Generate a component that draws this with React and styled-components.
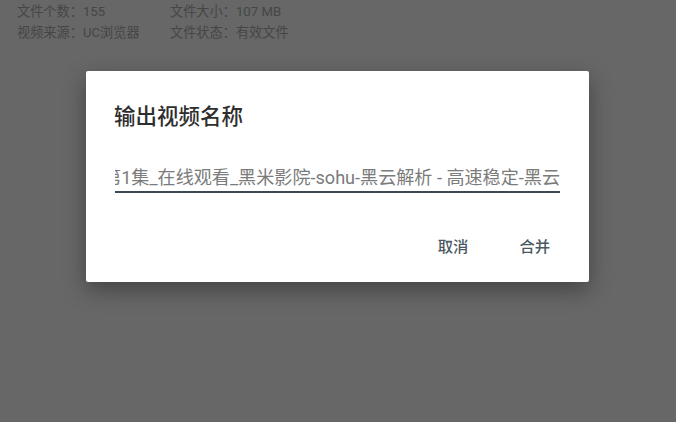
import React from 'react'
import styled, { createGlobalStyle } from 'styled-components'

const Global = createGlobalStyle`
  html, body {
    margin: 0;
    padding: 0;
    background: #666766;
  }
  body {
    font-family: Roboto, "Noto Sans CJK SC", sans-serif;
  }
`

const Screen = styled.div`
  width: 676px;
  height: 422px;
  background: #666766;
  overflow: hidden;
`

const InfoGrid = styled.div`
  display: grid;
  grid-template-columns: 153px auto;
  row-gap: 4px;
  padding: 3px 0 0 17px;
  font-size: 13.2px;
  line-height: 17px;
  color: #454645;
`

const DialogWrap = styled.div`
  padding: 30px 0 0 86px;
`

const Dialog = styled.div`
  width: 503px;
  height: 211px;
  background: #fff;
  border-radius: 2px;
  box-shadow: 0 8px 22px rgba(0, 0, 0, 0.35);
  box-sizing: border-box;
  padding: 32px 29px 0 28px;
  display: flex;
  flex-direction: column;
`

const Title = styled.h2`
  margin: 0;
  font-weight: 500;
  font-size: 21.5px;
  line-height: 28px;
  color: #2e2e2e;
`

const Field = styled.div`
  margin: 33px 0 0 1px;
  height: 27px;
  border-bottom: 2px solid #3b4a52;
  overflow: hidden;
  display: flex;
  justify-content: flex-end;
  align-items: flex-end;
`

const FieldText = styled.span`
  white-space: nowrap;
  font-size: 18.1px;
  line-height: 24px;
  padding-bottom: 1px;
  color: #7b7b7b;
`

const Actions = styled.div`
  display: flex;
  justify-content: flex-end;
  gap: 51px;
  margin-top: 44px;
  padding-right: 10px;
`

const ActionButton = styled.button`
  border: none;
  background: none;
  padding: 0;
  font-family: inherit;
  font-size: 15.3px;
  font-weight: 500;
  line-height: 20px;
  color: #4b5a62;
  cursor: pointer;
`

const App = () => {
  return (
    <Screen>
      <Global />
      <InfoGrid>
        <span>文件个数：155</span>
        <span>文件大小：107 MB</span>
        <span>视频来源：UC浏览器</span>
        <span>文件状态：有效文件</span>
      </InfoGrid>
      <DialogWrap>
        <Dialog>
          <Title>输出视频名称</Title>
          <Field>
            <FieldText>电视剧第1集_在线观看_黑米影院-sohu-黑云解析 - 高速稳定-黑云</FieldText>
          </Field>
          <Actions>
            <ActionButton>取消</ActionButton>
            <ActionButton>合并</ActionButton>
          </Actions>
        </Dialog>
      </DialogWrap>
    </Screen>
  )
}

export default App
